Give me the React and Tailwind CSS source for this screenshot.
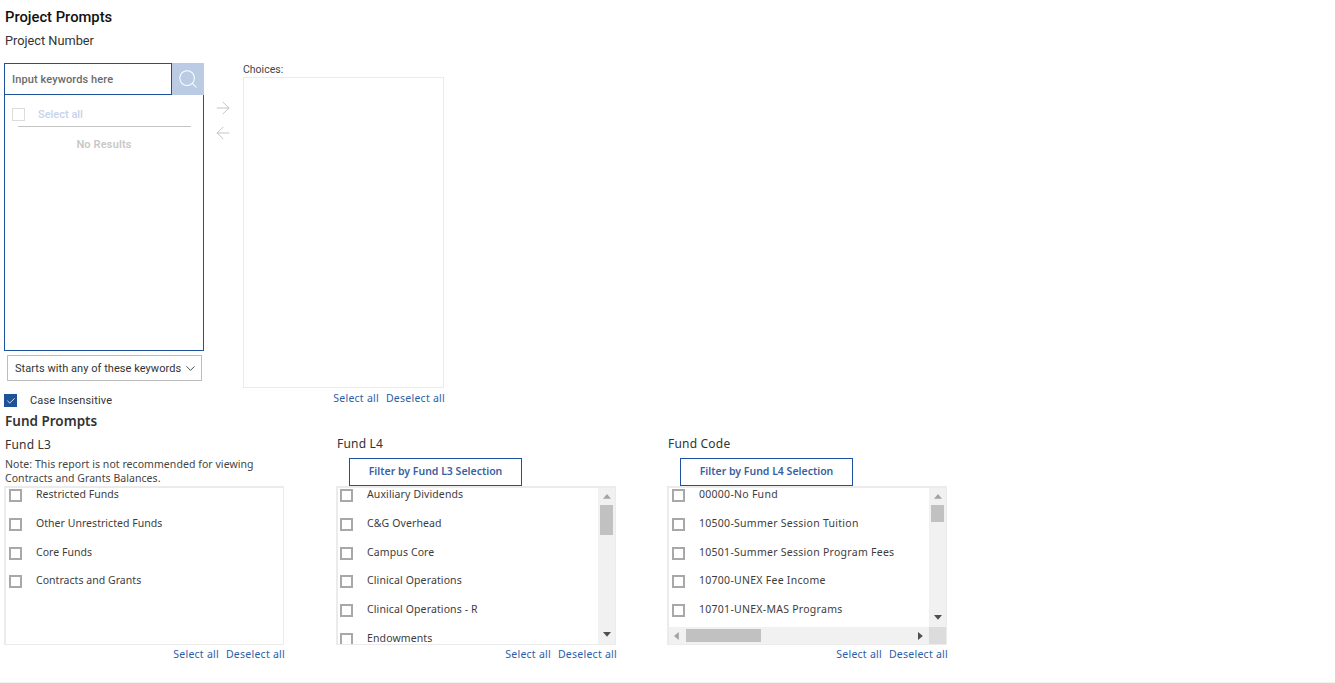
import React from 'react';
import { Search, ArrowRight, ArrowLeft, ChevronDown, Check } from 'lucide-react';

const plex = "font-['Noto_Sans',sans-serif]";
const roboto = "font-['Roboto',sans-serif]";

const fundL3 = ['Restricted Funds', 'Other Unrestricted Funds', 'Core Funds', 'Contracts and Grants'];
const fundL4 = ['Auxiliary Dividends', 'C&G Overhead', 'Campus Core', 'Clinical Operations', 'Clinical Operations - R', 'Endowments'];
const fundCode = [
  '00000-No Fund',
  '10500-Summer Session Tuition',
  '10501-Summer Session Program Fees',
  '10700-UNEX Fee Income',
  '10701-UNEX-MAS Programs',
];

const CheckRow = ({ label, tight, tracking }) => (
  <div className={`flex h-[28.8px] shrink-0 items-start ${tight ? 'pl-[2px]' : 'pl-[3px]'}`}>
    <span className="mt-[1px] size-[13px] shrink-0 border-2 border-[#a8a8a8] bg-white"></span>
    <span className={`ml-[14px] mt-[1px] whitespace-nowrap text-[10.5px] leading-[10px] text-[#3d3d3d] ${tracking} ${plex}`}>{label}</span>
  </div>
);

const Triangle = ({ dir }) => {
  const points = { up: '0,6 5,0 10,6', down: '0,0 5,6 10,0', left: '6,0 0,5 6,10', right: '0,0 6,5 0,10' }[dir];
  return (
    <svg width="8" height="8" viewBox="0 0 10 10" className="shrink-0">
      <polygon points={points} fill={dir === 'up' || dir === 'left' ? '#a3a3a3' : '#505050'} />
    </svg>
  );
};

const VerticalBar = ({ thumb }) => (
  <div className="flex w-[17px] shrink-0 flex-col items-center bg-[#f1f1f1]">
    <div className="flex h-[17px] items-center justify-center pt-[3px]"><Triangle dir="up" /></div>
    <div className="flex-1 self-stretch px-[2px]">
      <div className="w-full bg-[#c1c1c1]" style={{ height: thumb }}></div>
    </div>
    <div className="flex h-[17px] items-center justify-center"><Triangle dir="down" /></div>
  </div>
);

const HorizontalBar = () => (
  <div className="flex h-[17px] shrink-0 bg-[#f1f1f1]">
    <div className="flex flex-1 items-center">
      <div className="flex w-[17px] justify-center"><Triangle dir="left" /></div>
      <div className="h-[13px] w-[75px] bg-[#c1c1c1]"></div>
      <div className="flex-1"></div>
      <div className="flex w-[17px] justify-center pl-[2px]"><Triangle dir="right" /></div>
    </div>
    <div className="w-[17px] bg-[#dcdcdc]"></div>
  </div>
);

const LinkPair = ({ className = '' }) => (
  <div className={`flex justify-end gap-[7px] text-[10.5px] leading-[14px] tracking-[0.25px] text-[#2b5ea8] ${plex} ${className}`}>
    <span>Select all</span>
    <span>Deselect all</span>
  </div>
);

const FundColumn = ({ title, filter, note, items, thumb, hbar, tight, tracking, className = '' }) => (
  <div className={`w-[280px] ${className}`}>
    <div className={`pl-[1px] text-[12px] leading-[14px] tracking-[0.2px] text-[#333] ${plex} ${note ? 'h-[15px] pt-[1px]' : 'h-[14px]'}`}>{title}</div>
    {filter && (
      <button className={`mt-[7px] ml-[13px] flex h-[28px] w-[173px] items-center justify-center border border-[#1d5199] text-[10.5px] font-semibold text-[#3a5fa5] ${plex}`}>
        {filter}
      </button>
    )}
    {note && (
      <p className={`mt-[5px] h-[29px] pl-[1px] text-[10.5px] leading-[14px] tracking-[0.06px] text-[#444] ${plex}`}>{note}</p>
    )}
    <div className="flex h-[159px] flex-col overflow-hidden border-2 border-[#ebebeb] border-r-[1px] border-b-[1px]">
      <div className="flex min-h-0 flex-1">
        <div className="min-w-0 flex-1 overflow-hidden">
          {items.map((item) => (
            <CheckRow key={item} label={item} tight={tight} tracking={tracking} />
          ))}
        </div>
        {thumb && <VerticalBar thumb={thumb} />}
      </div>
      {hbar && <HorizontalBar />}
    </div>
    <LinkPair className="mt-[2px] mr-[-1px]" />
  </div>
);

export default function App() {
  return (
    <div className="h-[683px] w-[1335px] overflow-hidden bg-white pl-[4px] pt-[9px]">
      <h2 className={`pl-[1px] text-[14.75px] font-medium leading-[17px] text-[#111] ${roboto}`}>Project Prompts</h2>
      <div className={`mt-[7px] pl-[1px] text-[12.75px] leading-[15px] text-[#333] ${roboto}`}>Project Number</div>

      <div className="mt-[15px] flex items-start">
        {/* Поиск */}
        <div className="w-[200px]">
          <div className="flex h-[32px]">
            <div className={`flex flex-1 items-center border border-[#1d5199] pl-[7px] pt-[3px] text-[11px] font-medium tracking-[0.1px] text-[#6b6b6b] ${roboto}`}>
              Input keywords here
            </div>
            <div className="flex w-[32px] items-center justify-center bg-[#bccbe4]">
              <Search size={22} strokeWidth={1.1} className="text-white" />
            </div>
          </div>
          <div className="h-[256px] border border-t-0 border-[#1d5199] px-[7px] pt-[12px]">
            <div className="flex items-center">
              <span className="size-[13px] border border-[#dcdcdc]"></span>
              <span className={`ml-[13px] pt-[1px] text-[11px] font-medium leading-[14px] text-[#c6d3ea] ${roboto}`}>Select all</span>
            </div>
            <div className="ml-[6px] mr-[5px] mt-[4px] border-b border-[#c4c4c4]"></div>
            <div className={`mt-[11px] text-center text-[11px] font-semibold leading-[14px] tracking-[0.15px] text-[#c8c8c8] ${roboto}`}>No Results</div>
          </div>
          <div className={`ml-[3px] mt-[4px] flex h-[26px] w-[195px] items-center justify-between border border-[#bdbdbd] pl-[7px] pr-[3px] pt-[2px] text-[11px] tracking-[0.05px] text-[#333] ${roboto}`}>
            <span>Starts with any of these keywords</span>
            <ChevronDown size={15} strokeWidth={1.5} className="-mt-[2px] text-[#444]" />
          </div>
          <div className="mt-[13px] flex items-center">
            <span className="flex size-[13px] items-center justify-center bg-[#1d5199]">
              <Check size={10} strokeWidth={2} className="text-white" />
            </span>
            <span className={`ml-[13px] text-[11px] leading-[13px] tracking-[0.15px] text-[#333] ${roboto}`}>Case Insensitive</span>
          </div>
        </div>

        {/* Стрелки */}
        <div className="ml-[12px] mt-[35px] flex w-[13px] flex-col items-center gap-[5px] text-[#b8b8b8]">
          <ArrowRight size={20} strokeWidth={1} className="shrink-0" />
          <ArrowLeft size={20} strokeWidth={1} className="shrink-0" />
        </div>

        {/* Выбор */}
        <div className="ml-[14px] w-[201px]">
          <div className={`h-[14px] text-[10.5px] leading-[13px] text-[#444] ${roboto}`}>Choices:</div>
          <div className="h-[311px] border border-[#ebebeb]"></div>
          <LinkPair className="mt-[3px] mr-[-1px]" />
        </div>
      </div>

      <h2 className={`mt-[5px] pl-[1px] text-[13.5px] font-semibold leading-[18px] text-[#333] ${plex}`}>Fund Prompts</h2>

      <div className="mt-[7px] flex items-start">
        <FundColumn
          title="Fund L3"
          note="Note: This report is not recommended for viewing Contracts and Grants Balances."
          items={fundL3}
          tracking="tracking-[0.04px]"
        />
        <FundColumn title="Fund L4" filter="Filter by Fund L3 Selection" items={fundL4} thumb={30} tight tracking="tracking-[0.12px]" className="ml-[52px]" />
        <FundColumn title="Fund Code" filter="Filter by Fund L4 Selection" items={fundCode} thumb={17} hbar tracking="tracking-[0.27px]" className="ml-[51px]" />
      </div>

      <div className="ml-[-4px] mt-[21px] border-t border-[#f3f3e6]"></div>
    </div>
  );
}
